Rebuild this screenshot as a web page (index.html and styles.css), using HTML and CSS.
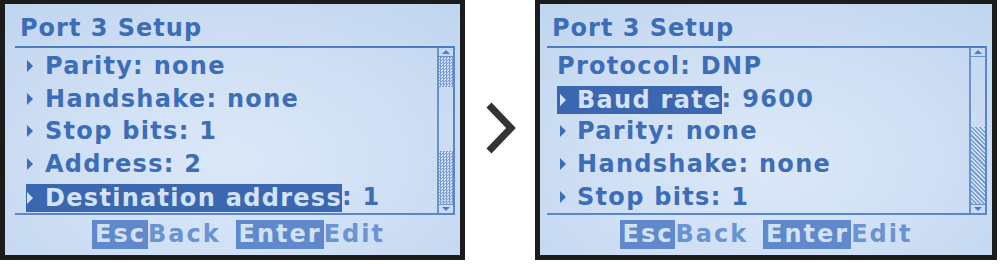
FILE: index.html
```html
<!DOCTYPE html>
<html>
<head>
<meta charset="utf-8">
<link rel="stylesheet" href="styles.css">
</head>
<body>
<div class="page">
  <div class="screen s1">
    <div class="title">Port 3 Setup</div>
    <div class="listbox">
      <div class="rows">
        <div class="row"><span class="arr"></span>Parity: none</div>
        <div class="row"><span class="arr"></span>Handshake: none</div>
        <div class="row"><span class="arr"></span>Stop bits: 1</div>
        <div class="row"><span class="arr"></span>Address: 2</div>
        <div class="row"><span class="hl"><span class="arr"></span>Destination address</span>: 1</div>
      </div>
      <div class="scroll">
        <div class="up"><span class="tri-up"></span></div>
        <div class="track">
          <div class="checker seg-a"></div>
          <div class="gap"></div>
          <div class="checker seg-b"></div>
        </div>
        <div class="down"><span class="tri-down"></span></div>
      </div>
    </div>
    <div class="footer"><span class="key">Esc</span><span class="lbl">Back</span><span class="key key2">Enter</span><span class="lbl">Edit</span></div>
  </div>

  <div class="mid">
    <svg class="chev" width="36" height="60" viewBox="0 0 36 60">
      <polyline points="6,5 28,28 6,51" fill="none" stroke="#333333" stroke-width="7"/>
    </svg>
  </div>

  <div class="screen s2">
    <div class="title">Port 3 Setup</div>
    <div class="listbox">
      <div class="rows">
        <div class="row plain">Protocol: DNP</div>
        <div class="row"><span class="hl"><span class="arr"></span>Baud rate</span>: 9600</div>
        <div class="row"><span class="arr"></span>Parity: none</div>
        <div class="row"><span class="arr"></span>Handshake: none</div>
        <div class="row"><span class="arr"></span>Stop bits: 1</div>
      </div>
      <div class="scroll">
        <div class="up"><span class="tri-up"></span></div>
        <div class="track">
          <div class="gap-fixed"></div>
          <div class="hatch"></div>
        </div>
        <div class="down"><span class="tri-down"></span></div>
      </div>
    </div>
    <div class="footer"><span class="key">Esc</span><span class="lbl">Back</span><span class="key key2">Enter</span><span class="lbl">Edit</span></div>
  </div>
</div>
</body>
</html>
```

FILE: styles.css
```css
html, body {
  margin: 0;
  padding: 0;
  background: #ffffff;
}

.page {
  display: flex;
  align-items: flex-start;
  width: 1000px;
  height: 264px;
}

.screen {
  box-sizing: border-box;
  height: 260px;
  border: 5px solid #1c1c1c;
  border-top-width: 4px;
  background: radial-gradient(ellipse 70% 80% at 50% 62%, #dbe8f8 0%, #cfdff4 55%, #c1d6f0 100%);
  display: flex;
  flex-direction: column;
  font-family: "DejaVu Sans", "Liberation Sans", sans-serif;
  font-weight: bold;
  font-size: 24px;
  letter-spacing: 1.3px;
  color: #3d6db6;
}

.s1 { width: 465px; }
.s2 { width: 462px; }

.title {
  height: 42px;
  box-sizing: border-box;
  padding-top: 7px;
  line-height: 35px;
  white-space: nowrap;
  letter-spacing: 1px;
}
.s1 .title { padding-left: 15px; }
.s2 .title { padding-left: 12px; }

.listbox {
  height: 169px;
  box-sizing: border-box;
  border-top: 2px solid #4d7cc0;
  border-right: 2px solid #5b87c6;
  border-bottom: 2px solid #5b87c6;
  display: flex;
  margin-right: 5px;
}
.s1 .listbox { margin-left: 10px; }
.s2 .listbox { margin-left: 7px; }

.rows {
  flex: 1;
  padding-top: 2px;
  display: flex;
  flex-direction: column;
}

.row {
  height: 33px;
  display: flex;
  align-items: center;
  white-space: nowrap;
  line-height: 28px;
}
.s1 .row { padding-left: 12px; }
.s2 .row { padding-left: 13px; }
.s2 .row.plain { padding-left: 10px; }

.arr {
  display: inline-block;
  width: 0;
  height: 0;
  border-left: 6px solid currentColor;
  border-top: 6px solid transparent;
  border-bottom: 6px solid transparent;
  margin-right: 12px;
}
.s2 .arr { margin-right: 11px; }

.hl {
  display: inline-flex;
  align-items: center;
  background: #3b67b0;
  color: #d3e2f6;
  height: 28px;
  margin-top: 2px;
}
.s1 .hl { margin-left: -1px; padding-left: 1px; }
.s2 .hl { margin-left: -3px; padding-left: 3px; }

.scroll {
  width: 14px;
  border-left: 2px solid #6a93cd;
  display: flex;
  flex-direction: column;
}

.up, .down {
  height: 8px;
  display: flex;
  align-items: center;
  justify-content: center;
}
.up { border-bottom: 1px solid #6a93cd; }
.down { border-top: 1px solid #6a93cd; }

.tri-up {
  width: 0; height: 0;
  border-left: 4px solid transparent;
  border-right: 4px solid transparent;
  border-bottom: 4px solid #4d7cc0;
}
.tri-down {
  width: 0; height: 0;
  border-left: 4px solid transparent;
  border-right: 4px solid transparent;
  border-top: 4px solid #4d7cc0;
}

.track {
  flex: 1;
  display: flex;
  flex-direction: column;
}

.checker {
  background-color: #c9daf0;
  background-image: repeating-conic-gradient(#7b9fd4 0 25%, #d3e1f4 0 50%);
  background-size: 3px 3px;
}
.seg-a { height: 30px; }
.gap { flex: 1; }
.seg-b { height: 53px; }

.gap-fixed { height: 70px; }
.hatch {
  flex: 1;
  background-image: repeating-linear-gradient(45deg, #7da0d4 0 1.5px, #d3e1f4 1.5px 3px);
}

.footer {
  flex: 1;
  display: flex;
  align-items: center;
  justify-content: center;
  letter-spacing: 2px;
  color: #6a93d2;
  white-space: nowrap;
  padding-bottom: 2px;
}
.s1 .footer { padding-left: 12px; }

.key {
  background: #5f89ca;
  color: #d2e1f6;
  line-height: 29px;
  height: 29px;
  padding: 0 2px 0 3px;
}
.key2 { margin-left: 15px; }

.mid {
  width: 70px;
  height: 260px;
  display: flex;
  align-items: center;
  justify-content: center;
}
.chev { display: block; margin-left: 1px; }
```
